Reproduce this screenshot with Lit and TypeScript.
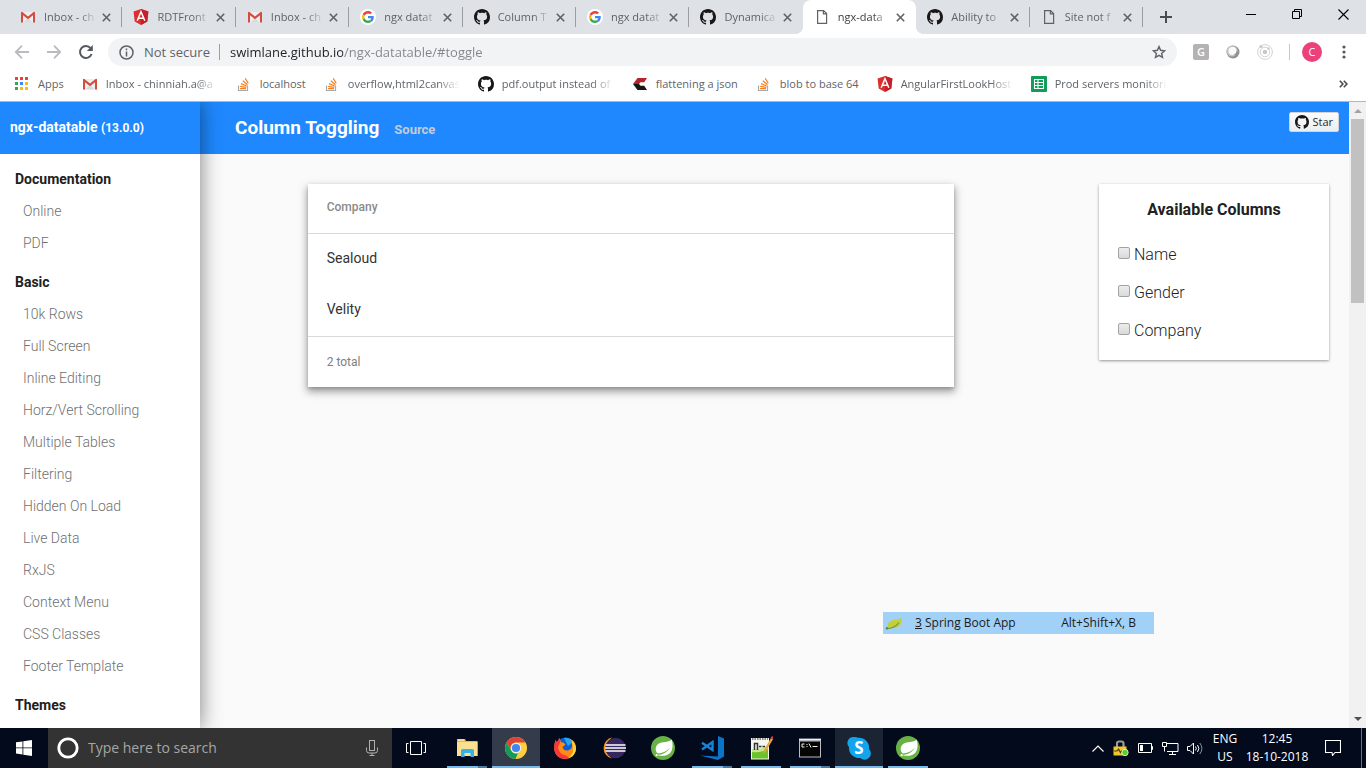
import { LitElement, html, css, nothing, type TemplateResult } from "lit";
import { customElement } from "lit/decorators.js";
import { classMap } from "lit/directives/class-map.js";

/* ---------- icons ---------- */

const github = (size = 16) => html`<svg width=${size} height=${size} viewBox="0 0 16 16" fill="#191717" aria-hidden="true">
  <path d="M8 0C3.58 0 0 3.58 0 8c0 3.54 2.29 6.53 5.47 7.59.4.07.55-.17.55-.38 0-.19-.01-.82-.01-1.49-2.01.37-2.53-.49-2.69-.94-.09-.23-.48-.94-.82-1.13-.28-.15-.68-.52-.01-.53.63-.01 1.08.58 1.23.82.72 1.21 1.87.87 2.33.66.07-.52.28-.87.51-1.07-1.78-.2-3.64-.89-3.64-3.95 0-.87.31-1.59.82-2.15-.08-.2-.36-1.02.08-2.12 0 0 .67-.21 2.2.82.64-.18 1.32-.27 2-.27.68 0 1.36.09 2 .27 1.53-1.04 2.2-.82 2.2-.82.44 1.1.16 1.92.08 2.12.51.56.82 1.27.82 2.15 0 3.07-1.87 3.75-3.65 3.95.29.25.54.73.54 1.48 0 1.07-.01 1.93-.01 2.2 0 .21.15.46.55.38A8.013 8.013 0 0016 8c0-4.42-3.58-8-8-8z"/>
</svg>`;

const gmail = () => html`<svg width="16" height="16" viewBox="0 0 16 16" aria-hidden="true">
  <path d="M1 3h14v10.5H1z" fill="#eceff1"/>
  <path d="M3.5 13.5 8 8.8l4.5 4.7z" fill="#d9dcde"/>
  <path d="M1 3.2A1 1 0 0 1 2.4 3L8 7.6 13.6 3a1 1 0 0 1 1.4.2v10.3h-2V6.3l-5 4-5-4v7.2H1z" fill="#d54b3d"/>
</svg>`;

const angular = () => html`<svg width="16" height="16" viewBox="0 0 16 16" aria-hidden="true">
  <path d="M8 0 .6 2.6l1.1 9.9L8 16l6.3-3.5 1.1-9.9z" fill="#dd2f2f"/>
  <path d="M8 0v16l6.3-3.5 1.1-9.9z" fill="#c3202c"/>
  <path d="m4.2 11.8 3.8-9 3.8 9M5.8 9.2h4.4" fill="none" stroke="#fff" stroke-width="1.5"/>
</svg>`;

const google = () => html`<svg width="16" height="16" viewBox="0 0 64 64" aria-hidden="true">
  <circle cx="32" cy="32" r="32" fill="#fff"/>
  <g transform="translate(8 8)">
    <path fill="#EA4335" d="M24 9.5c3.54 0 6.71 1.22 9.21 3.6l6.85-6.85C35.9 2.38 30.47 0 24 0 14.62 0 6.51 5.38 2.56 13.22l7.98 6.19C12.43 13.72 17.74 9.5 24 9.5z"/>
    <path fill="#4285F4" d="M46.98 24.55c0-1.57-.15-3.09-.38-4.55H24v9.02h12.94c-.58 2.96-2.26 5.48-4.78 7.18l7.73 6c4.51-4.18 7.09-10.36 7.09-17.65z"/>
    <path fill="#FBBC05" d="M10.53 28.59A14.5 14.5 0 0 1 9.77 24c0-1.6.27-3.14.76-4.59l-7.98-6.19A23.9 23.9 0 0 0 0 24c0 3.88.92 7.54 2.56 10.78z"/>
    <path fill="#34A853" d="M24 48c6.48 0 11.93-2.13 15.89-5.81l-7.73-6c-2.15 1.45-4.92 2.3-8.16 2.3-6.26 0-11.57-4.22-13.47-9.91l-7.98 6.19C6.51 42.62 14.62 48 24 48z"/>
  </g>
</svg>`;

const pageIcon = () => html`<svg width="16" height="16" viewBox="0 0 16 16" fill="none" stroke="#5f6368" stroke-width="1.2" aria-hidden="true">
  <path d="M3.6 1.6h6l3 3v9.8h-9zM9.4 1.6v3.2h3.2"/>
</svg>`;

const stack = () => html`<svg width="16" height="16" viewBox="0 0 16 16" fill="none" aria-hidden="true">
  <path d="M2.5 9.5v5h9v-5" stroke="#a7aaad" stroke-width="1.2"/>
  <path d="M4 12.6h6M4.2 10.3l6 1M5 7.6l5.6 2.4M6.8 4.8l4.6 4M9.2 2.2l3 5.2" stroke="#f48024" stroke-width="1.2"/>
</svg>`;

const appsGrid = () => {
  const colors = ["#ea4335", "#ea4335", "#ea4335", "#34a853", "#4285f4", "#fbbc05", "#34a853", "#fbbc05", "#fbbc05"];
  return html`<span class="apps-grid" aria-hidden="true">${colors.map((c) => html`<i style="background:${c}"></i>`)}</span>`;
};

const ribbon = () => html`<svg width="16" height="16" viewBox="0 0 16 16" aria-hidden="true">
  <path d="M5.500 2H15l-2.800 4.300H8.500L7 8H1z" fill="#b5242b"/>
  <path d="M1 8h6l1.500 1.700h3.700L15 14H5.500z" fill="#17171a"/>
</svg>`;

const sheet = () => html`<svg width="16" height="16" viewBox="0 0 16 16" aria-hidden="true">
  <rect width="16" height="16" rx="1" fill="#0f9d58"/>
  <path d="M3.5 3.5h9v9h-9zM3.5 6.5h9M3.5 9.5h9M7 3.5v9" fill="none" stroke="#fff" stroke-width="1.1"/>
</svg>`;

const closeIcon = (size = 9) => html`<svg width=${size} height=${size} viewBox="0 0 9 9" fill="none" stroke="#5f6368" stroke-width="1.6" aria-hidden="true"><path d="M.8.8l7.4 7.4M8.2.8.8 8.2"/></svg>`;

const leafRound = () => html`<svg width="24" height="24" viewBox="0 0 24 24" aria-hidden="true">
  <circle cx="12" cy="12" r="12" fill="#68b245"/>
  <path d="M20.6 3.6c1.6 5.200 1.500 11-2 14-3.400 2.900-8.600 2.600-12.400 1.300 4.800-.3 9.600-2.300 12.600-7-3.300 3.700-7.600 5.100-12 5.700-3-2.400-2.900-7.300.7-9.800 4-2.700 9.500-.5 13.100-4.200z" fill="#fff"/>
  <circle cx="5.600" cy="19.200" r="1.100" fill="#fff"/>
</svg>`;

/* ---------- browser frame ---------- */

interface Tab { icon: () => TemplateResult; title: string; active?: boolean; long?: boolean }

const TABS: Tab[] = [
  { icon: gmail, title: "Inbox - ch" },
  { icon: angular, title: "RDTFront" },
  { icon: gmail, title: "Inbox - ch" },
  { icon: google, title: "ngx datat" },
  { icon: github, title: "Column T" },
  { icon: google, title: "ngx datat" },
  { icon: github, title: "Dynamica" },
  { icon: pageIcon, title: "ngx-data", active: true },
  { icon: github, title: "Ability to" },
  { icon: pageIcon, title: "Site not f" },
];

const BOOKMARKS: Tab[] = [
  { icon: appsGrid, title: "Apps" },
  { icon: gmail, title: "Inbox - chinniah.a@a", long: true },
  { icon: stack, title: "localhost" },
  { icon: stack, title: "overflow,html2canvas", long: true },
  { icon: github, title: "pdf.output instead of", long: true },
  { icon: ribbon, title: "flattening a json" },
  { icon: stack, title: "blob to base 64" },
  { icon: angular, title: "AngularFirstLookHost", long: true },
  { icon: sheet, title: "Prod servers monitori", long: true },
];

@customElement("browser-frame")
class BrowserFrame extends LitElement {
  static styles = css`
    :host { display: block; font: 11px/16px "Open Sans", "Noto Sans", sans-serif; color: #5f6368; background: #fff; }
    button { border: 0; padding: 0; margin: 0; background: none; font: inherit; color: inherit; display: flex; align-items: center; justify-content: center; }
    svg { display: block; flex: none; }
    .strip { display: flex; height: 34px; background: #dee1e6; padding-left: 9px; }
    .tabs { flex: 1; min-width: 0; display: flex; }
    .tab { flex: 1 1 0; min-width: 0; display: flex; align-items: center; gap: 8px; padding: 0 11px; position: relative; }
    .tab button { margin-left: -8px; }
    .tab::after { content: ""; position: absolute; right: 0; top: 7px; height: 20px; width: 1px; background: #9a9da1; }
    .tab.active::after, .tab:has(+ .active)::after { display: none; }
    .tab.active { background: #fff; border-radius: 8px 8px 0 0; color: #3c4043; }
    .tab.active::before { content: ""; position: absolute; left: -8px; right: -8px; bottom: 0; height: 8px;
      background: radial-gradient(circle at 0 0, #dee1e6 8px, #fff 8px) left / 8px 8px no-repeat, radial-gradient(circle at 100% 0, #dee1e6 8px, #fff 8px) right / 8px 8px no-repeat; }
    .title { flex: 1; min-width: 0; overflow: hidden; white-space: nowrap; mask-image: linear-gradient(to right, #000 60%, transparent 92%); }
    .newtab { width: 45px; }
    .windowctl { display: flex; width: 178px; padding-left: 40px; box-sizing: border-box; }
    .windowctl button { flex: 1; height: 28px; }
    .toolbar { display: flex; align-items: center; height: 36px; padding-right: 16px; }
    .nav { display: flex; width: 108px; padding-left: 6px; box-sizing: border-box; }
    .nav button { width: 32px; height: 32px; }
    .omnibox { flex: 1; min-width: 0; display: flex; align-items: center; gap: 10px; height: 28px; border-radius: 14px; background: #f1f3f4; padding: 0 11px; font-size: 13px; }
    .secure { border-right: 1px solid #9aa0a6; padding-right: 9px; white-space: nowrap; }
    .omnibox input { flex: 1; min-width: 0; border: 0; padding: 0; outline: 0; font: inherit; line-height: 20px; color: transparent;
      background: linear-gradient(to right, #202124 113px, #80868b 113px); background-clip: text; -webkit-background-clip: text; }
    .exts { display: flex; align-items: center; gap: 16px; padding-left: 16px; }
    .rule { width: 1px; height: 16px; background: #c6c9cc; margin-right: -4px; }
    .avatar { width: 20px; height: 20px; border-radius: 10px; background: #ec407a; color: #fff; }
    .gext { width: 16px; height: 16px; border-radius: 2px; background: #b3b3b3; color: #fff; font-weight: 600; }
    .bookmarks { display: flex; align-items: center; height: 27px; padding: 0 18px 4px 14px; gap: 18px; border-bottom: 1px solid #b4b6b8; }
    .bm { display: flex; align-items: center; gap: 8px; color: inherit; text-decoration: none; }
    .label { white-space: nowrap; }
    .bm.long .label { width: 112px; mask-image: linear-gradient(to right, #000 80%, transparent); }
    .apps-grid { width: 13px; height: 13px; margin-left: 1px; margin-right: 2px; display: grid; grid-template-columns: repeat(3, 3px); grid-auto-rows: 3px; gap: 2px; }
    .more { margin-left: auto; }
  `;

  render() {
    return html`
      <div class="strip">
        <div class="tabs" role="tablist">
          ${TABS.map((t) => html`<div class=${classMap({ tab: true, active: !!t.active })} role="tab" aria-selected=${t.active ? "true" : "false"}>
            ${t.icon()}<span class="title">${t.title}</span><button aria-label="Close tab">${closeIcon()}</button>
          </div>`)}
        </div>
        <button class="newtab" aria-label="New tab"><svg width="12" height="12" viewBox="0 0 12 12" stroke="#494c50" stroke-width="2"><path d="M6 0v12M0 6h12"/></svg></button>
        <div class="windowctl">
          <button aria-label="Minimize"><svg width="10" height="10" stroke="#000"><path d="M0 5.5h10"/></svg></button>
          <button aria-label="Restore"><svg width="10" height="10" fill="none" stroke="#000"><path d="M.5 2.500h7v7h-7zM2.500 2.500v-2h7v7h-2"/></svg></button>
          <button aria-label="Close window"><svg width="11" height="11" stroke="#000" stroke-width="1.100"><path d="M.5.5l10 10M10.500.5l-10 10"/></svg></button>
        </div>
      </div>
      <div class="toolbar">
        <div class="nav">
          <button aria-label="Back"><svg width="16" height="16" fill="none" stroke="#b9bbbe" stroke-width="1.800"><path d="M15 8H2M8 1.600 1.800 8 8 14.400"/></svg></button>
          <button aria-label="Forward"><svg width="16" height="16" fill="none" stroke="#b9bbbe" stroke-width="1.800"><path d="M1 8h13M8 1.600 14.200 8 8 14.400"/></svg></button>
          <button aria-label="Reload"><svg width="16" height="16" fill="none" stroke="#55585c" stroke-width="2"><path d="M13.600 10A6 6 0 1 1 12.600 4.100"/><path d="M14.800 1v6h-6z" fill="#55585c" stroke="none"/></svg></button>
        </div>
        <div class="omnibox">
          <svg width="15" height="15" fill="none" stroke="#5f6368" stroke-width="1.500"><circle cx="7.500" cy="7.500" r="6.500"/><path d="M7.500 6.500v5M7.500 3.500v1.700"/></svg>
          <span class="secure">Not secure</span>
          <input type="text" aria-label="Address" .value=${"swimlane.github.io/ngx-datatable/#toggle"} />
          <button aria-label="Bookmark this page"><svg width="14" height="14" viewBox="0 0 14 14" fill="none" stroke="#5f6368" stroke-width="1.400"><path d="M7 1.600l1.600 3.700 4 .4-3 2.700.9 4L7 10.300l-3.500 2.100.9-4-3-2.700 4-.4z"/></svg></button>
        </div>
        <div class="exts">
          <button class="gext" aria-label="Grammar extension">G</button>
          <button aria-label="Orb extension"><svg width="16" height="16"><circle cx="8" cy="8" r="6.500" fill="#8f8f8f"/><circle cx="7" cy="7" r="5.500" fill="#c4c4c4"/><circle cx="7.500" cy="7" r="4" fill="#fafafa"/><path d="M8.500 10.800q3-1 3-4.300l1 3-2 2z" fill="#8f8f8f"/></svg></button>
          <button aria-label="Atom extension"><svg width="16" height="16" fill="none" stroke="#d3d3d3"><circle cx="8" cy="8" r="7.400"/><circle cx="8" cy="8" r="4.800"/><circle cx="8" cy="8" r="2.300" fill="#c9c9c9" stroke="none"/><circle cx="4" cy="2.500" r="1.600" fill="#c9c9c9" stroke="none"/><circle cx="11.500" cy="4.500" r="1.200" fill="#c9c9c9" stroke="none"/></svg></button>
          <span class="rule"></span>
          <button class="avatar" aria-label="Profile">C</button>
          <button aria-label="Menu"><svg width="12" height="14" fill="#55585c"><circle cx="6" cy="2" r="1.600"/><circle cx="6" cy="7" r="1.600"/><circle cx="6" cy="12" r="1.600"/></svg></button>
        </div>
      </div>
      <div class="bookmarks">
        ${BOOKMARKS.map((b) => html`<a href="#" class=${classMap({ bm: true, long: !!b.long })}>${b.icon()}<span class="label">${b.title}</span></a>`)}
        <button class="more" aria-label="More bookmarks"><svg width="9" height="8" fill="none" stroke="#494c50" stroke-width="1.600"><path d="M.8.8 3.900 4 .8 7.200M4.800.8 7.900 4 4.800 7.200"/></svg></button>
      </div>`;
  }
}

/* ---------- demo page ---------- */

const SECTIONS: { name: string; items: string[] }[] = [
  { name: "Documentation", items: ["Online", "PDF"] },
  { name: "Basic", items: ["10k Rows", "Full Screen", "Inline Editing", "Horz/Vert Scrolling", "Multiple Tables", "Filtering", "Hidden On Load", "Live Data", "RxJS", "Context Menu", "CSS Classes", "Footer Template"] },
  { name: "Themes", items: [] },
];

@customElement("demo-page")
class DemoPage extends LitElement {
  static styles = css`
    :host { display: flex; position: relative; overflow: hidden; background: #fafafa; font: 14px/20px Roboto, sans-serif; color: #212121; }
    .side { width: 200px; flex: none; background: #fff; box-shadow: 0 0 20px rgba(0, 0, 0, .5); z-index: 1; clip-path: inset(0 -24px 0 0); }
    .brand { height: 52px; box-sizing: border-box; padding: 15px 10px; background: #1f88ff; color: #fff; font-weight: 700; }
    .brand small { font-size: 12px; }
    nav { display: flex; flex-direction: column; gap: 7px; padding: 9px 15px; }
    h3, ul { margin: 0; padding: 0; font-size: 14px; line-height: 32px; list-style: none; }
    h3 { font-weight: 700; }
    li a { display: block; padding-left: 8px; color: #707070; font-weight: 300; text-decoration: none; }
    .main { flex: 1; min-width: 0; }
    header { display: flex; align-items: center; height: 52px; padding: 0 10px 0 35px; background: #1f88ff; color: #fff; }
    h1 { margin: 0; font-size: 19px; line-height: 52px; font-weight: 700; }
    header a { margin: 4px auto 0 15px; font-size: 13px; font-weight: 700; color: #c4cbd2; text-decoration: none; }
    .star { align-self: flex-start; margin-top: 10px; display: flex; align-items: center; gap: 3px; height: 20px; padding: 0 5px; border: 1px solid #d4d4d4; border-radius: 2px;
      background: linear-gradient(#fcfcfc, #ebeef1); font: 11px/18px "Open Sans", sans-serif; color: #24292e; }
    .content { display: flex; padding: 30px 0; align-items: flex-start; }
    .left { flex: 0 0 75%; }
    .table { width: 75%; margin: 0 auto; border-spacing: 0; background: #fff; text-align: left; box-shadow: 0 4px 8px 1px rgba(0, 0, 0, .35), 0 2px 3px rgba(0, 0, 0, .15); }
    .table th, .table td { padding: 0 19px; height: 51px; box-sizing: border-box; }
    .table th { height: 50px; padding-bottom: 3px; font-size: 12px; font-weight: 500; color: #8a8a8a; border-bottom: 1px solid #d9d9d9; }
    .table tbody td { padding-bottom: 4px; color: #333; }
    .table tfoot td { border-top: 1px solid #d9d9d9; font-size: 12px; color: #808080; }
    .right { flex: 1; padding-right: 20px; }
    .panel { width: 230px; max-width: 100%; margin-left: auto; box-sizing: border-box; padding: 10px 19px; background: #fff; border-radius: 1px; box-shadow: 0 1px 3px rgba(0, 0, 0, .4); }
    h2 { margin: 0 0 17px; font-size: 16px; line-height: 32px; font-weight: 700; text-align: center; }
    label { display: flex; align-items: center; gap: 4px; font-size: 16px; line-height: 24px; font-weight: 300; margin-bottom: 14px; }
    label:last-child { margin-bottom: 7px; }
    input { appearance: none; width: 12px; height: 12px; box-sizing: border-box; margin: 0 0 5px; border: 1px solid #a3a3a3; border-radius: 2px; background: linear-gradient(#ececec, #dadada); }
    .scroll { width: 17px; flex: none; background: #f1f1f1; display: flex; flex-direction: column; align-items: center; box-sizing: border-box; padding: 7px 0; }
    .thumb { width: 13px; height: 184px; background: #c1c1c1; margin: 6px 0 auto; }
    .scroll svg { display: block; }
    .popup { position: absolute; right: 212px; bottom: 94px; display: flex; align-items: center; height: 22px; width: 271px; box-sizing: border-box; padding: 0 18px 0 2px; border: 0; background: #a2d1f7; color: #1b1b1b; font: 12px/22px "Open Sans", sans-serif; }
    .popup span { margin: 0 auto 0 12px; }
    kbd { font: inherit; }
  `;

  render() {
    return html`
      <aside class="side">
        <div class="brand">ngx-datatable <small>(13.0.0)</small></div>
        <nav>
          ${SECTIONS.map((s) => html`<section><h3>${s.name}</h3>
            ${s.items.length ? html`<ul>${s.items.map((i) => html`<li><a href="#">${i}</a></li>`)}</ul>` : nothing}</section>`)}
        </nav>
      </aside>
      <main class="main">
        <header><h1>Column Toggling</h1><a href="#">Source</a><button class="star">${github(14)}Star</button></header>
        <div class="content">
          <div class="left">
            <table class="table">
              <thead><tr><th>Company</th></tr></thead>
              <tbody><tr><td>Sealoud</td></tr><tr><td>Velity</td></tr></tbody>
              <tfoot><tr><td>2 total</td></tr></tfoot>
            </table>
          </div>
          <div class="right"><div class="panel">
            <h2>Available Columns</h2>
            ${["Name", "Gender", "Company"].map((n) => html`<label><input type="checkbox" />${n}</label>`)}
          </div></div>
        </div>
      </main>
      <div class="scroll" aria-hidden="true">
        <svg width="8" height="4" fill="#a3a3a3"><path d="M0 4l4-4 4 4z"/></svg>
        <div class="thumb"></div>
        <svg width="8" height="4" fill="#505050"><path d="M0 0l4 4 4-4z"/></svg>
      </div>
      <button class="popup">
        <svg width="18" height="16" viewBox="0 0 18 16"><path d="M16.800 2c.5 6.500-1.500 10.300-8 10.800l-6 .2C1.800 7.500 5 5.400 9 5c4-.3 6.300-1 7.800-3z" fill="#c3cf3b"/><path d="M1 13.600c5 .2 9.500-1.600 13-6" fill="none" stroke="#7a9a3c" stroke-width="1.200"/><circle cx="2" cy="13.200" r="1.200" fill="#4b8f5a"/></svg>
        <span><u>3</u> Spring Boot App</span><kbd>Alt+Shift+X, B</kbd>
      </button>`;
  }
}

/* ---------- taskbar ---------- */

const folder = () => html`<svg width="24" height="24" viewBox="0 0 24 24"><path d="M2 3h8l1 2h11.500v15H2z" fill="#e9b64a"/><path d="M2 6h20.500v14H2z" fill="#fbe08d"/><path d="M3 3.500h6v1.200H3z" fill="#fff3c4"/><path d="M6 21v-6.500q0-1.500 1.500-1.500h10q1.500 0 1.500 1.500V21h-3.500v-4h-6v4z" fill="#38b0e8"/></svg>`;
const chrome = () => html`<svg width="24" height="24" viewBox="0 0 24 24"><circle cx="12" cy="12" r="11" fill="#ffcd40"/><path d="M2.500 6.500A11 11 0 0 1 21.500 6.500H12A5.500 5.500 0 0 0 7.200 14.700z" fill="#db4437"/><path d="M2.500 6.500 7.200 14.700A5.500 5.500 0 0 0 14 17.100L11.500 23A11 11 0 0 1 2.500 6.500z" fill="#0f9d58"/><circle cx="12" cy="12" r="5.200" fill="#f1f1f1"/><circle cx="12" cy="12" r="4.100" fill="#4285f4"/></svg>`;
const firefox = () => html`<svg width="24" height="24" viewBox="0 0 24 24"><circle cx="12.500" cy="11" r="9.500" fill="#0a5fd6"/><path d="M11 2a9 9 0 0 1 9 4l-5 4z" fill="#1fa9f4"/><path d="M2.500 4 4 6.500 6.500 2 8 6q3 0 4.500 2.500L9.500 11q1 4 5.500 3.500 3-.5 4-3.500.5-4.500-2.500-8.500Q24 6 23 13.500 21.500 22.500 12 23 2.500 22.500 1.200 13.500 1 8 2.500 4z" fill="#ff8a16"/><path d="M2.500 4 4 6.500 6.500 2l.8 4-2.300 5q.5 7 8 8.500l3 2.500-4 1Q2.500 22.500 1.200 13.500 1 8 2.500 4z" fill="#f7363f"/><path d="M19 4.500q5 5 3.500 11-2 5.500-7 6.500 5.500-4.500 4.500-10z" fill="#ffd83a"/></svg>`;
const eclipse = () => html`<svg width="24" height="24" viewBox="0 0 24 24"><path d="M10 1.300A11 11 0 0 0 10 22.700 14 14 0 0 1 10 1.300z" fill="#f7941e"/><circle cx="13.500" cy="12" r="10.300" fill="#34285f"/><path d="M3.500 9h20M3 12h21M3.500 15h20" stroke="#fff" stroke-width="1.400"/></svg>`;
const vscode = () => html`<svg width="24" height="24" viewBox="0 0 24 24"><path d="M18 0l6 2.500v18L18 24 0 19.500l18 1z" fill="#0a74c9"/><path d="M2 6.800 12.500 14V6L2 13.500" fill="none" stroke="#1684d8" stroke-width="2.400"/></svg>`;
const notepad = () => html`<svg width="24" height="24" viewBox="0 0 24 24"><path d="M2 2h18v21.500H2z" fill="#f5f7ee"/><path d="M3 14q8 1 16-4v12.500H3z" fill="#6cc22a"/><path d="M3 13q8 1 16-4v4q-8 4-16 3z" fill="#c3e88f"/><path d="M3 3h16" stroke="#888" stroke-width="2" stroke-dasharray="1.500 1"/><path d="M5.500 14V7.500h3V14M10 10.500h2.500M13.500 10.500h2.500" stroke="#333" stroke-width="1.500" fill="none"/><path d="m14 18 1-4 7-12 2 1.300-7 12z" fill="#e8a33d"/><path d="m21.500 2 1.500-2 1.500 1-1 2.300z" fill="#e23b4a"/></svg>`;
const terminal = () => html`<svg width="24" height="24" viewBox="0 0 24 24"><path d="M1 2.500h22v19H1z" fill="#b9bcc0"/><path d="M2 5.500h20v15H2z" fill="#050505"/><path d="M1 3.500h22" stroke="#eee"/><path d="M6.500 8H4v3h2.500M8.500 8.500h1M8.500 10.500h1M11 7.500l2 4M14.500 10.500h5" stroke="#eee" fill="none"/></svg>`;
const skype = () => html`<svg width="24" height="24" viewBox="0 0 24 24"><path d="M7 1a6 6 0 0 1 4 .8A10 10 0 0 1 22 13a6 6 0 0 1-8.800 8.900A10 10 0 0 1 2 11 6 6 0 0 1 7 1z" fill="#12a5ee"/><text x="12" y="18" text-anchor="middle" font-size="17" font-weight="700" font-family="Open Sans" fill="#fff">S</text></svg>`;

const APPS = [
  { name: "File Explorer", icon: folder, state: "multi" },
  { name: "Chrome", icon: chrome, state: "active" },
  { name: "Firefox", icon: firefox, state: "" },
  { name: "Eclipse", icon: eclipse, state: "" },
  { name: "Spring Tool Suite", icon: leafRound, state: "" },
  { name: "Visual Studio Code", icon: vscode, state: "multi" },
  { name: "Notepad++", icon: notepad, state: "open" },
  { name: "Command Prompt", icon: terminal, state: "multi" },
  { name: "Skype", icon: skype, state: "active dim" },
  { name: "Spring", icon: leafRound, state: "open" },
];

@customElement("task-bar")
class TaskBar extends LitElement {
  static styles = css`
    :host { display: flex; height: 40px; background: #020a1c; color: #fff; font: 12px/18px "Open Sans", sans-serif; }
    button { border: 0; padding: 0; margin: 0; background: none; color: inherit; font: inherit; display: flex; align-items: center; justify-content: center; }
    svg { display: block; flex: none; }
    .start, .view { width: 48px; }
    .search { width: 344px; box-sizing: border-box; padding: 0 14px 0 9px; background: #333; display: flex; align-items: center; gap: 9px; }
    .search input { flex: 1; min-width: 0; border: 0; padding: 0; background: none; outline: 0; font: 14px/20px "Open Sans", sans-serif; color: #fff; }
    .search input::placeholder { color: #a6a6a6; opacity: 1; }
    .apps { display: flex; gap: 1px; margin: 0 auto 0 3px; }
    .app { width: 48px; position: relative; }
    .app.active { background: #343b4b; }
    .app.dim { background: #1b2433; }
    .app.open::after, .app.multi::after, .app.active::after { content: ""; position: absolute; left: 4px; right: 4px; bottom: 0; height: 2px; background: #76b9ed; }
    .app.active::after { left: 0; right: 0; }
    .app.multi::after { background: linear-gradient(to right, #76b9ed 31px, #4a7aa3 31px); }
    .tray, .status { display: flex; align-items: center; }
    .status { gap: 8px; padding-right: 4px; }
    .lang { width: 36px; text-align: center; }
    .clock { width: 68px; text-align: center; white-space: nowrap; }
    .note { width: 44px; }
    .edge { width: 1px; align-self: stretch; background: #6a6f7a; margin: 0 4px 0 6px; }
  `;

  render() {
    return html`
      <button class="start" aria-label="Start"><svg width="16" height="16" fill="#fff"><path d="M0 2.300 6.500 1.400v6.100H0zM7.300 1.300 16 0v7.500H7.300zM0 8.300h6.500v6.200L0 13.600zM7.300 8.300H16V16l-8.700-1.300z"/></svg></button>
      <div class="search">
        <svg width="22" height="22" fill="none" stroke="#fff" stroke-width="2.800"><circle cx="11" cy="11" r="9.200"/></svg>
        <input type="text" aria-label="Search" placeholder="Type here to search" />
        <svg width="12" height="16" fill="none" stroke="#b0b0b0"><rect x="3.500" y=".5" width="5" height="10"/><path d="M.5 7.500v3q0 2.500 2.500 2.500h6q2.500 0 2.500-2.500v-3M6 13v2.500M3.500 15.500h5"/></svg>
      </div>
      <button class="view" aria-label="Task view"><svg width="20" height="14" fill="none" stroke="#fff"><path d="M4.500.5h11v13h-11zM2.500 2.500h-2v9h2M17.500 2.500h2v9h-2"/></svg></button>
      <div class="apps">
        ${APPS.map((a) => html`<button class="app ${a.state}" aria-label=${a.name}>${a.icon()}</button>`)}
      </div>
      <div class="tray">
        <div class="status">
          <button aria-label="Show hidden icons"><svg width="12" height="7" fill="none" stroke="#fff" stroke-width="1.200"><path d="M.5 6.500 6 1l5.500 5.500"/></svg></button>
          <svg width="18" height="16"><path d="M5 7V3.500q0-2 2-2h2.500q2 0 2 2V7" fill="none" stroke="#9a9a9a" stroke-width="2.200"/><path d="M1.500 6.500h13v9h-13z" fill="#f2c62d"/><path d="M2 11h3l1.500-2 2 3.500 1-1.500H14" fill="none" stroke="#4a3b00" stroke-width="1.200"/><circle cx="13" cy="12.500" r="3.200" fill="#5ccb2c" stroke="#e8ffe0" stroke-width=".8"/></svg>
          <svg width="16" height="10" fill="none" stroke="#fff"><path d="M.5.5h13v9H.5zM13.500 3.500h1v3h-1"/><path d="M2 2h3v6H2z" fill="#fff" stroke="none"/></svg>
          <svg width="17" height="13" fill="none" stroke="#fff"><path d="M5 1.500h11v8H5M.5.5h4v4h-4zM2.500 4.500v5M10.500 9.500v3M7 12.500h7"/></svg>
          <svg width="16" height="13" fill="none" stroke="#fff"><path d="M.5 4.500h2.500L6.500 1v11L3 8.500H.5zM8.500 4.500q1.500 2 0 4M10.500 3q2.800 3.500 0 7"/><path d="M12.800 1q4.200 5.500 0 11" stroke="#8b919c"/></svg>
        </div>
        <div class="lang">ENG<br />US</div>
        <div class="clock">12:45<br />18-10-2018</div>
        <button class="note" aria-label="Notifications"><svg width="16" height="16" fill="none" stroke="#fff" stroke-width="1.100"><path d="M.5.5h15v12H10L7.500 15.500 7 12.500H.5z"/></svg></button>
        <span class="edge"></span>
      </div>`;
  }
}

@customElement("app-root")
class AppRoot extends LitElement {
  static styles = css`
    :host { display: flex; flex-direction: column; height: 100vh; overflow: hidden; }
    demo-page { flex: 1; min-height: 0; }
  `;

  render() {
    return html`<browser-frame></browser-frame><demo-page></demo-page><task-bar></task-bar>`;
  }
}
